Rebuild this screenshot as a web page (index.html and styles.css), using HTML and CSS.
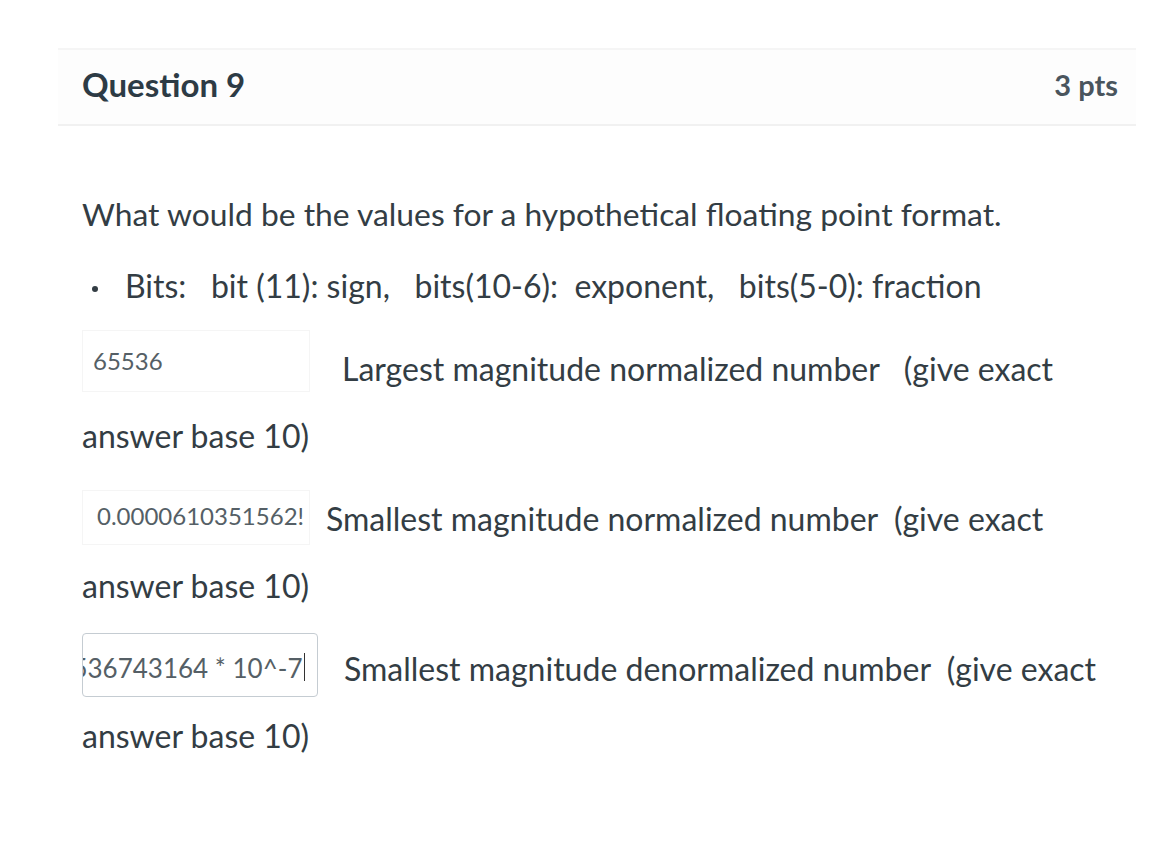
FILE: index.html
```html
<!DOCTYPE html>
<html>
<head>
<meta charset="utf-8">
<link rel="stylesheet" href="styles.css">
</head>
<body>
<div class="question">
  <div class="q-header">
    <span class="q-title">Question 9</span>
    <span class="q-pts">3 pts</span>
  </div>
  <div class="q-body">
    <p class="prompt">What would be the values for a hypothetical floating point format.</p>
    <ul class="bits">
      <li>Bits:&nbsp;&nbsp; bit (11): sign,&nbsp;&nbsp; bits(10-6):&nbsp; exponent,&nbsp;&nbsp; bits(5-0): fraction</li>
    </ul>
    <p class="row row1"><span class="answer a1">65536</span>Largest magnitude normalized number&nbsp;&nbsp; (give exact answer base 10)</p>
    <p class="row row2"><span class="answer a2">0.0000610351562!</span>Smallest magnitude normalized number&nbsp; (give exact answer base 10)</p>
    <p class="row row3"><span class="answer a3"><span class="a3-inner"><span class="clip">536743164 * 10^-7</span><span class="caret"></span></span></span>Smallest magnitude denormalized number&nbsp; (give exact answer base 10)</p>
  </div>
</div>
</body>
</html>
```

FILE: styles.css
```css
html, body {
  margin: 0;
  padding: 0;
  background: #ffffff;
}
body {
  font-family: Lato, "Open Sans", sans-serif;
  color: #333d44;
}
.question {
  margin: 48px 34px 0 58px;
}
.q-header {
  display: flex;
  justify-content: space-between;
  align-items: center;
  height: 74px;
  padding: 0 18px 0 24px;
  background: #fdfdfd;
  border-top: 2px solid #f5f5f5;
  border-bottom: 2px solid #f1f1f1;
}
.q-title {
  font-weight: 700;
  font-size: 33px;
  color: #2d3b45;
  margin-top: -7px;
}
.q-pts {
  font-weight: 700;
  font-size: 29px;
  color: #4a555d;
  margin-top: -5px;
}
.q-body {
  padding: 0 17px 0 24px;
}
.prompt {
  font-size: 31.8px;
  margin: 68px 0 0 0;
  line-height: 40px;
}
.bits {
  font-size: 32px;
  margin: 32px 0 0 0;
  padding-left: 43px;
  line-height: 40px;
  list-style: none;
}
.bits li {
  position: relative;
}
.bits li::before {
  content: "";
  position: absolute;
  left: -33px;
  top: 20px;
  width: 6px;
  height: 6px;
  border-radius: 50%;
  background: #333d44;
}
.row {
  font-size: 32px;
  margin: 0;
  line-height: 67px;
}
.row1 { margin-top: 24px; }
.row2 { margin-top: 16px; }
.row3 { margin-top: 14px; }
.answer {
  display: inline-block;
  box-sizing: border-box;
  font-size: 24px;
  color: #555f66;
  line-height: 30px;
  background: #fff;
  white-space: nowrap;
  overflow: hidden;
}
.a1 {
  width: 228px;
  height: 62px;
  padding: 15px 10px;
  border: 1px solid #f5f5f5;
  margin-right: 32px;
  vertical-align: -11px;
}
.a2 {
  width: 228px;
  height: 55px;
  padding: 10px 14px;
  border: 1px solid #f5f5f5;
  margin-right: 16px;
  vertical-align: -14px;
}
.a3 {
  width: 236px;
  height: 64px;
  padding: 19px 12px 0 0;
  border: 1px solid #c5ccd2;
  border-radius: 4px;
  margin-right: 26px;
  vertical-align: -16px;
  font-size: 26px;
}
.a3-inner {
  display: flex;
  justify-content: flex-end;
  align-items: flex-start;
}
.clip {
  flex: none;
  white-space: nowrap;
}
.caret {
  display: block;
  flex: none;
  width: 1.5px;
  height: 28px;
  background: #333;
  margin-left: 1px;
}
```
